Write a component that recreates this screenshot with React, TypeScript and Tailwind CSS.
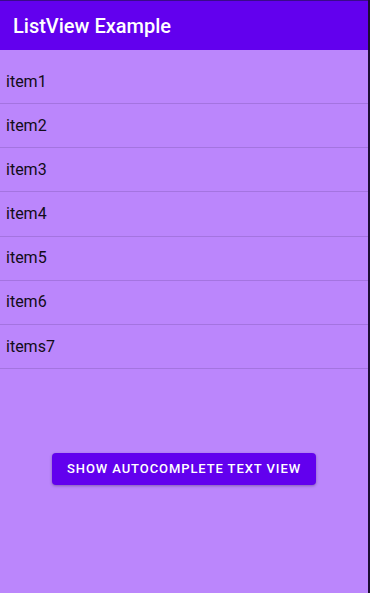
const items = ["item1", "item2", "item3", "item4", "item5", "item6", "items7"];

export default function App() {
  return (
    <div className="flex h-[593px] w-[370px] font-['Roboto',sans-serif]">
      <div className="flex flex-1 flex-col border-t border-[#3a0a8a] bg-[#bb86fc]">
        <header className="flex h-[49px] items-center bg-[#6200ee] px-[13px]">
          <h1 className="text-[20px] font-medium text-white">ListView Example</h1>
        </header>
        <ul className="pt-[10px]">
          {items.map((item) => (
            <li
              key={item}
              className="flex h-[44.17px] items-center border-b border-[#a474e0] px-[6px] text-[16px] text-[#120c18]"
            >
              {item}
            </li>
          ))}
        </ul>
        <div className="mt-[84px] flex justify-center">
          <button className="h-[32px] w-[264px] rounded-[4px] bg-[#6200ee] text-[13px] font-medium tracking-[0.07em] text-white shadow-[0_1px_3px_rgba(0,0,0,0.3)]">
            SHOW AUTOCOMPLETE TEXT VIEW
          </button>
        </div>
      </div>
      <div className="w-[2px] bg-[#1c0d33]" />
    </div>
  );
}
